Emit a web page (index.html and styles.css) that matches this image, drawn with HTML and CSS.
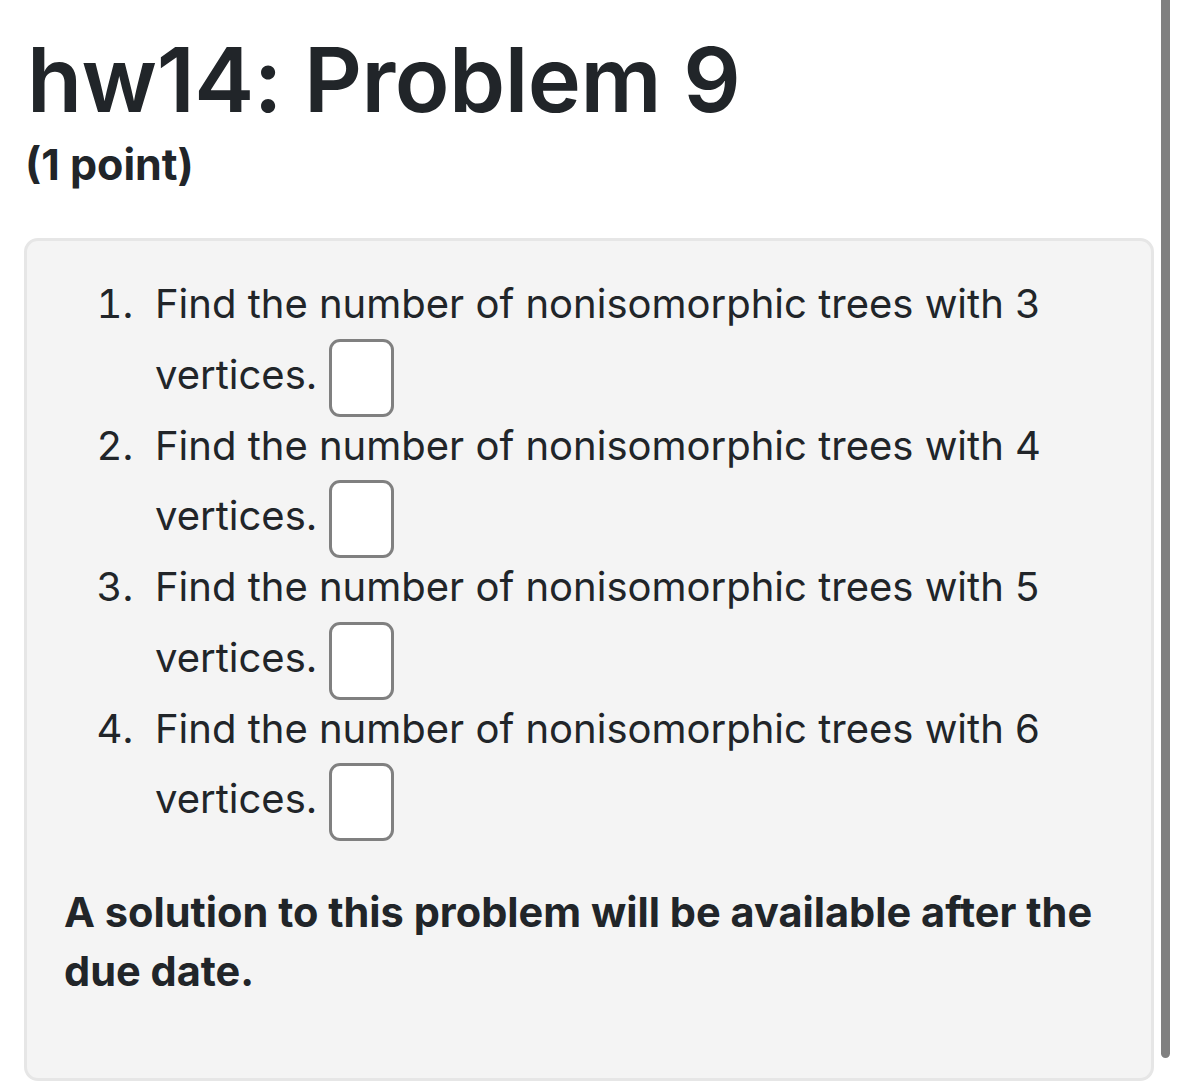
FILE: index.html
```html
<!DOCTYPE html>
<html>
<head>
<meta charset="utf-8">
<link rel="stylesheet" href="styles.css">
</head>
<body>
<div class="page">
  <h1 class="title">hw14: Problem 9</h1>
  <div class="points">(1 point)</div>
  <div class="problem">
    <ol class="parts">
      <li>Find the number of nonisomorphic trees with 3 vertices. <span class="answer"></span></li>
      <li>Find the number of nonisomorphic trees with 4 vertices. <span class="answer"></span></li>
      <li>Find the number of nonisomorphic trees with 5 vertices. <span class="answer"></span></li>
      <li>Find the number of nonisomorphic trees with 6 vertices. <span class="answer"></span></li>
    </ol>
    <p class="solution">A solution to this problem will be available after the due date.</p>
  </div>
</div>
<div class="scrollbar"></div>
</body>
</html>
```
FILE: styles.css
```css
html, body {
  margin: 0;
  padding: 0;
  background: #ffffff;
}
body {
  font-family: Inter, "Noto Sans", sans-serif;
  color: #212529;
  width: 1179px;
  height: 1084px;
  overflow: hidden;
}
.page {
  padding: 0 25px 0 24px;
}
.title {
  margin: 0;
  padding-top: 30px;
  padding-left: 3px;
  font-size: 90px;
  font-weight: 600;
  line-height: 100px;
  letter-spacing: -0.5px;
}
.points {
  padding-left: 1px;
  font-size: 43px;
  font-weight: 700;
  line-height: 60px;
  margin-top: 4px;
  letter-spacing: 0;
}
.problem {
  margin-top: 44px;
  background: #f4f4f4;
  border: 3px solid #e6e6e6;
  border-radius: 14px;
  height: 843px;
  box-sizing: border-box;
  padding: 28px 37px 0 37px;
}
.parts {
  margin: 0;
  padding-left: 80px;
  font-size: 40px;
  line-height: 70.5px;
}
.parts li {
  padding-left: 11px;
}
.answer {
  display: inline-block;
  width: 65px;
  height: 78px;
  box-sizing: border-box;
  border: 3px solid #808080;
  border-radius: 11px;
  background: #ffffff;
  vertical-align: -22px;
  margin: -4px 0 -6px 0;
}
.solution {
  margin: 48px 0 0 0;
  font-size: 41.5px;
  font-weight: 700;
  line-height: 59px;
}
.scrollbar {
  position: fixed;
  top: 0;
  left: 1161px;
  width: 9px;
  height: 1058px;
  background: #808080;
  border-radius: 0 0 5px 5px;
}
```
